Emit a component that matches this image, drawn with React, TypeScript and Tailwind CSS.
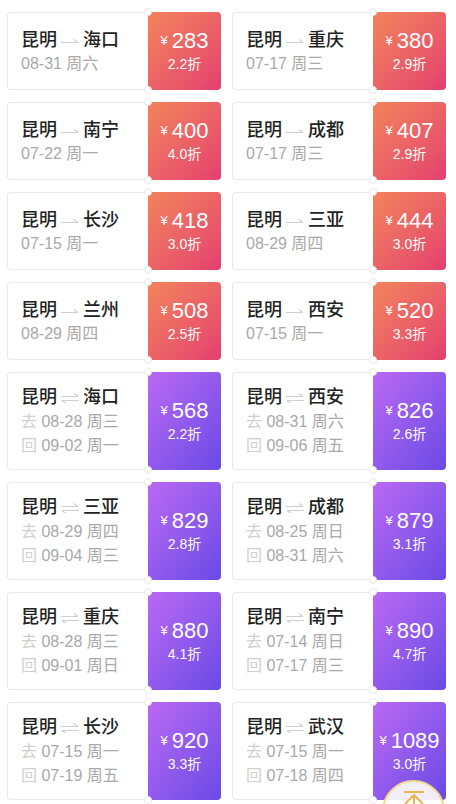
import React from 'react';

type Trip = {
  to: string;
  go: string;
  back?: string;
  price: string;
  discount: string;
};

const oneWay: Trip[] = [
  { to: '海口', go: '08-31 周六', price: '283', discount: '2.2折' },
  { to: '重庆', go: '07-17 周三', price: '380', discount: '2.9折' },
  { to: '南宁', go: '07-22 周一', price: '400', discount: '4.0折' },
  { to: '成都', go: '07-17 周三', price: '407', discount: '2.9折' },
  { to: '长沙', go: '07-15 周一', price: '418', discount: '3.0折' },
  { to: '三亚', go: '08-29 周四', price: '444', discount: '3.0折' },
  { to: '兰州', go: '08-29 周四', price: '508', discount: '2.5折' },
  { to: '西安', go: '07-15 周一', price: '520', discount: '3.3折' },
];

const roundTrip: Trip[] = [
  { to: '海口', go: '08-28 周三', back: '09-02 周一', price: '568', discount: '2.2折' },
  { to: '西安', go: '08-31 周六', back: '09-06 周五', price: '826', discount: '2.6折' },
  { to: '三亚', go: '08-29 周四', back: '09-04 周三', price: '829', discount: '2.8折' },
  { to: '成都', go: '08-25 周日', back: '08-31 周六', price: '879', discount: '3.1折' },
  { to: '重庆', go: '08-28 周三', back: '09-01 周日', price: '880', discount: '4.1折' },
  { to: '南宁', go: '07-14 周日', back: '07-17 周三', price: '890', discount: '4.7折' },
  { to: '长沙', go: '07-15 周一', back: '07-19 周五', price: '920', discount: '3.3折' },
  { to: '武汉', go: '07-15 周一', back: '07-18 周四', price: '1089', discount: '3.0折' },
];

function OneWayArrow() {
  return (
    <svg width="18" height="8" viewBox="0 0 18 8" className="mx-[4px] mt-[3px]">
      <path d="M0 5.5h17M13 2.5l4 3" stroke="#cfcfcf" strokeWidth="1.2" fill="none" />
    </svg>
  );
}

function RoundArrow() {
  return (
    <svg width="18" height="10" viewBox="0 0 18 10" className="mx-[4px] mt-[3px]">
      <path d="M0 3.5h17M13 0.5l4 3M1 7.5h17M5 10.5l-4-3" stroke="#cfcfcf" strokeWidth="1.2" fill="none" />
    </svg>
  );
}

function TicketCard({ trip }: { trip: Trip }) {
  const round = !!trip.back;
  return (
    <div className={`flex ${round ? 'h-[98px]' : 'h-[78px]'}`}>
      <div className="flex w-[141px] flex-col justify-center rounded-l-[4px] border border-r-0 border-[#e8e8e8] bg-white pl-[13px]">
        <div className="flex items-center text-[18px] font-medium leading-[24px] text-[#222]">
          <span>昆明</span>
          {round ? <RoundArrow /> : <OneWayArrow />}
          <span>{trip.to}</span>
        </div>
        {round ? (
          <div className="mt-[1px] text-[16px] leading-[24px] text-[#a9a9a9]">
            <div>
              <span className="text-[#cfcfcf]">去</span> {trip.go}
            </div>
            <div>
              <span className="text-[#cfcfcf]">回</span> {trip.back}
            </div>
          </div>
        ) : (
          <div className="mt-[1px] text-[16px] leading-[22px] text-[#a9a9a9]">{trip.go}</div>
        )}
      </div>
      <div
        className={`relative flex flex-1 flex-col items-center justify-center rounded-r-[4px] bg-linear-to-br text-white ${
          round ? 'from-[#bb68f3] to-[#6a49e6]' : 'from-[#f2835a] to-[#e43e6e]'
        }`}
      >
        <div className="flex items-center">
          <span className="mb-[2px] mr-[4px] text-[13px] leading-none">¥</span>
          <span className="text-[22px] leading-[26px]">{trip.price}</span>
        </div>
        <div className="text-[14px] leading-[20px]">{trip.discount}</div>
        <span className="absolute -left-[4px] -top-[4px] h-[8px] w-[8px] rounded-full border border-[#e8e8e8] bg-white" />
        <span className="absolute -bottom-[4px] -left-[4px] h-[8px] w-[8px] rounded-full border border-[#e8e8e8] bg-white" />
      </div>
    </div>
  );
}

export default function App() {
  return (
    <div
      className="relative h-[804px] overflow-hidden bg-white"
      style={{ fontFamily: '"Liberation Sans", "Noto Sans CJK SC", sans-serif' }}
    >
      <div className="grid grid-cols-2 gap-x-[11px] gap-y-[12px] pl-[7px] pr-[10px] pt-[12px]">
        {oneWay.map((t, i) => (
          <TicketCard key={'o' + i} trip={t} />
        ))}
        {roundTrip.map((t, i) => (
          <TicketCard key={'r' + i} trip={t} />
        ))}
      </div>

      <button className="absolute left-[382px] top-[780px] flex h-[63px] w-[63px] justify-center rounded-full border-2 border-[#f3d98c] bg-white/90">
        <svg width="24" height="20" viewBox="0 0 24 20" className="mt-[9px]">
          <path d="M2 1h20M12 4v16M3 13l9-9 9 9" stroke="#e9b84c" strokeWidth="2" fill="none" />
        </svg>
      </button>
    </div>
  );
}
